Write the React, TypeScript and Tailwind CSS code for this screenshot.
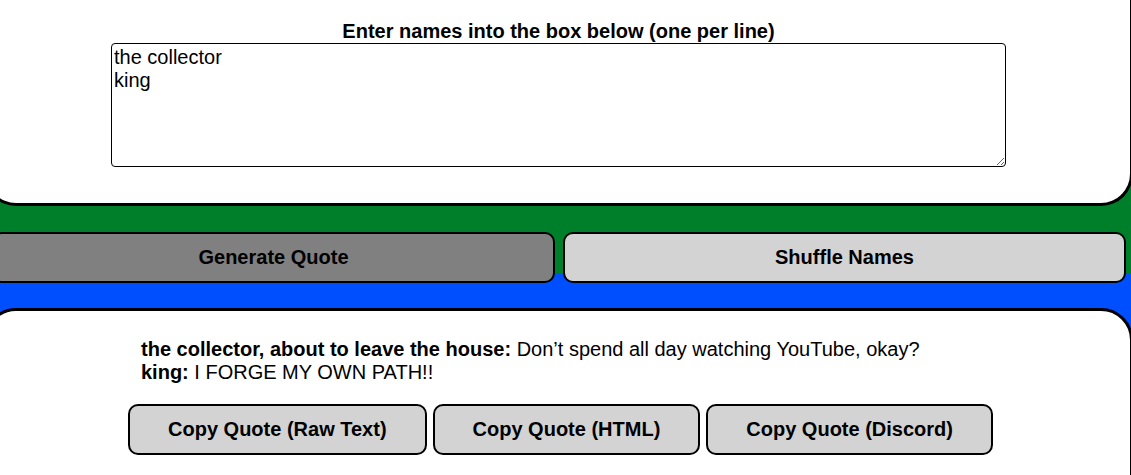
import { useState } from "react"

const COPY_BUTTONS = ["Copy Quote (Raw Text)", "Copy Quote (HTML)", "Copy Quote (Discord)"]

export default function App() {
  const [names, setNames] = useState("the collector\nking")

  return (
    <div className="w-[1131px] h-[475px] overflow-hidden bg-[#007f2a] font-['Liberation_Sans',Arial,sans-serif] text-[20px] leading-[23px] text-black">
      {/* Names panel */}
      <div className="ml-[-16px] w-[1149px] bg-white border-[3px] border-t-0 border-black rounded-b-[32px] pt-[20px] pb-[36px] flex flex-col items-center">
        <h2 className="font-bold">Enter names into the box below (one per line)</h2>
        <textarea
          value={names}
          onChange={(e) => setNames(e.target.value)}
          className="w-[895px] h-[124px] border border-black rounded-[4px] p-[2px] bg-white"
        />
      </div>

      {/* Actions */}
      <div className="h-[67px] pt-[26px]">
        <div className="relative z-10 ml-[-8px] w-[1134px] flex gap-[8px]">
          <button className="flex-1 h-[51px] border-2 border-black rounded-[10px] bg-[#808080] font-bold">
            Generate Quote
          </button>
          <button className="flex-1 h-[51px] border-2 border-black rounded-[10px] bg-[#d3d3d3] font-bold">
            Shuffle Names
          </button>
        </div>
      </div>

      {/* Quote output */}
      <div className="bg-[#004fff] pt-[35px] h-full">
        <div className="ml-[-16px] w-[1149px] h-[200px] bg-white border-[3px] border-black rounded-[32px] pt-[27px]">
          <div className="w-[835px] mx-auto">
            <p>
              <b>the collector, about to leave the house:</b> Don’t spend all day watching YouTube, okay?
            </p>
            <p>
              <b>king:</b> I FORGE MY OWN PATH!!
            </p>
          </div>
          <div className="mt-[20px] pl-[4px] flex justify-center gap-[6px]">
            {COPY_BUTTONS.map((label) => (
              <button
                key={label}
                className="h-[51px] px-[38px] border-2 border-black rounded-[10px] bg-[#d3d3d3] font-bold"
              >
                {label}
              </button>
            ))}
          </div>
        </div>
      </div>
    </div>
  )
}
